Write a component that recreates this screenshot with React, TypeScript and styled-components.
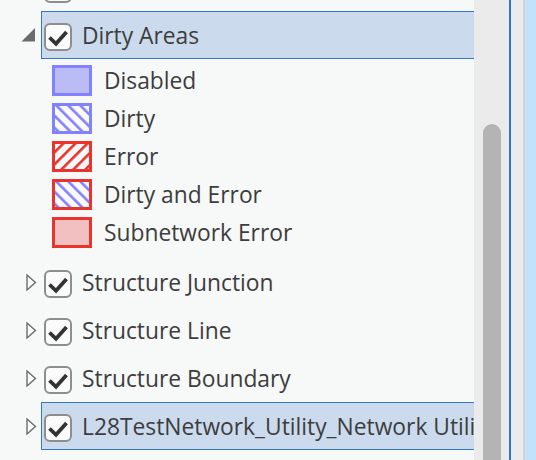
import React from "react";
import styled, { createGlobalStyle } from "styled-components";

const Global = createGlobalStyle`
  html, body { margin: 0; padding: 0; }
  body { background: #f7f8f8; font-family: "Open Sans", "Noto Sans", sans-serif; }
`;

const Screen = styled.div`
  display: flex;
  width: 536px;
  height: 460px;
  overflow: hidden;
`;

const TreePane = styled.div`
  width: 474px;
  flex: none;
  background: #f7f8f8;
  overflow: hidden;
`;

const TreeList = styled.div`
  margin-top: -37px;
  display: flex;
  flex-direction: column;
`;

const Row = styled.div`
  height: 48px;
  display: flex;
  align-items: stretch;
`;

const ExpanderCell = styled.div`
  width: 41px;
  flex: none;
  display: flex;
  align-items: center;
  justify-content: flex-end;
  padding-right: 4px;
  box-sizing: border-box;
  padding-top: 1px;
`;

const Item = styled.div<{ $selected?: boolean }>`
  flex: none;
  width: 600px;
  box-sizing: border-box;
  display: flex;
  align-items: center;
  gap: 10px;
  padding-left: 2px;
  padding-top: 3px;
  border: 1px solid ${(p) => (p.$selected ? "#3478c5" : "transparent")};
  background: ${(p) => (p.$selected ? "#cbdbed" : "transparent")};
`;

const Label = styled.span<{ $lift?: number }>`
  font-size: 22.8px;
  color: #3d3d3d;
  white-space: nowrap;
  line-height: 1;
  margin-top: ${(p) => -(p.$lift ?? 0)}px;
`;

const Legend = styled.div`
  padding: 2px 0 7px 52px;
  display: flex;
  flex-direction: column;
`;

const LegendItem = styled.div`
  height: 38px;
  display: flex;
  align-items: center;
  gap: 12px;
`;

const SwatchBox = styled.svg`
  width: 40px;
  height: 31px;
  flex: none;
  display: block;
`;

const Track = styled.div`
  width: 35px;
  flex: none;
  background: #ebebeb;
  padding: 124px 0 0 9px;
  box-sizing: border-box;
`;

const Thumb = styled.div`
  width: 18px;
  height: 400px;
  background: #b4b4b4;
  border-radius: 9px 9px 0 0;
`;

const Divider = styled.div<{ $w: number; $c: string }>`
  width: ${(p) => p.$w}px;
  flex: none;
  background: ${(p) => p.$c};
`;

const SidePanel = styled.div`
  flex: 1;
  background: #c2e2fb;
`;

const CheckBox = () => (
  <svg width="28" height="28" viewBox="0 0 28 28" style={{ flex: "none", display: "block" }}>
    <rect x="1" y="1" width="26" height="26" rx="5" fill="#fbfbfb" stroke="#8e8e8e" strokeWidth="2" />
    <path d="M5.5 14.5 L12 20.8 L22.5 9" fill="none" stroke="#333" strokeWidth="3.8" strokeLinejoin="miter" />
  </svg>
);

const ExpandedArrow = () => (
  <svg width="15" height="14" viewBox="0 0 15 14" style={{ display: "block", marginRight: 1, marginTop: -2 }}>
    <path d="M0.5 13.5 L14 13.5 L14 0 Z" fill="#6b6b6b" />
  </svg>
);

const CollapsedArrow = () => (
  <svg width="11" height="17" viewBox="0 0 11 17" style={{ display: "block" }}>
    <path d="M1 1 L9.5 8.5 L1 16 Z" fill="none" stroke="#6e6e6e" strokeWidth="1.4" strokeLinejoin="miter" />
  </svg>
);

type SwatchKind = "disabled" | "dirty" | "error" | "dirtyError" | "subnet";

const BLUE = "#8282ff";
const RED = "#e8342c";

const Swatch = ({ kind, id }: { kind: SwatchKind; id: string }) => {
  const border = kind === "disabled" || kind === "dirty" ? BLUE : RED;
  const stripe = kind === "error" ? RED : BLUE;
  const hatched = kind === "dirty" || kind === "error" || kind === "dirtyError";
  const rot = kind === "error" ? 45 : -45;
  const fill =
    kind === "disabled" ? "#bbbbf6" : kind === "subnet" ? "#f2c0c0" : hatched ? `url(#${id})` : "#fff";
  return (
    <SwatchBox viewBox="0 0 40 31">
      {hatched && (
        <defs>
          <pattern id={id} patternUnits="userSpaceOnUse" width="8.5" height="8.5" patternTransform={`rotate(${rot})`}>
            <rect width="8.5" height="8.5" fill="#fafafa" />
            <rect width="2.6" height="8.5" fill={stripe} />
          </pattern>
        </defs>
      )}
      <rect x="1.5" y="1.5" width="37" height="28" fill={fill} stroke={border} strokeWidth="3" />
    </SwatchBox>
  );
};

const legend: { kind: SwatchKind; label: string }[] = [
  { kind: "disabled", label: "Disabled" },
  { kind: "dirty", label: "Dirty" },
  { kind: "error", label: "Error" },
  { kind: "dirtyError", label: "Dirty and Error" },
  { kind: "subnet", label: "Subnetwork Error" },
];

type Node = { label: string; expanded?: boolean; selected?: boolean };

const TreeRow = ({ node }: { node: Node }) => (
  <Row>
    <ExpanderCell>{node.expanded ? <ExpandedArrow /> : <CollapsedArrow />}</ExpanderCell>
    <Item $selected={node.selected}>
      <CheckBox />
      <Label $lift={0}>{node.label}</Label>
    </Item>
  </Row>
);

export default function App() {
  return (
    <>
      <Global />
      <Screen>
        <TreePane>
          <TreeList>
            <TreeRow node={{ label: "Subnetwork Lines" }} />
            <TreeRow node={{ label: "Dirty Areas", expanded: true, selected: true }} />
            <Legend>
              {legend.map((l, i) => (
                <LegendItem key={l.label}>
                  <Swatch kind={l.kind} id={`hatch-${i}`} />
                  <Label $lift={-2}>{l.label}</Label>
                </LegendItem>
              ))}
            </Legend>
            <TreeRow node={{ label: "Structure Junction" }} />
            <TreeRow node={{ label: "Structure Line" }} />
            <TreeRow node={{ label: "Structure Boundary" }} />
            <TreeRow node={{ label: "L28TestNetwork_Utility_Network Utility Network", selected: true }} />
          </TreeList>
        </TreePane>
        <Track>
          <Thumb />
        </Track>
        <Divider $w={2} $c="#2f77c6" />
        <Divider $w={12} $c="#ebebeb" />
        <Divider $w={2} $c="#d3d3d3" />
        <SidePanel />
      </Screen>
    </>
  );
}
